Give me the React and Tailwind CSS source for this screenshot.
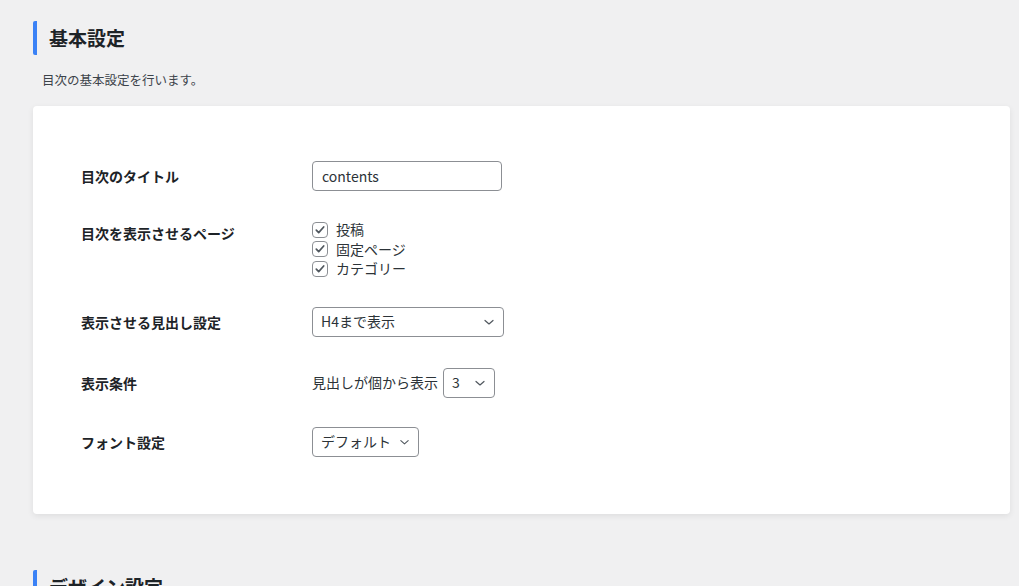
const font = { fontFamily: '"Noto Sans CJK JP", "Noto Sans", sans-serif' };

function Chevron({ className = '' }) {
  return (
    <svg className={className} width="12" height="12" viewBox="0 0 12 12" fill="none">
      <path d="M2 4.5l4 3.5 4-3.5" stroke="#50575e" strokeWidth="1.2" strokeLinecap="round" strokeLinejoin="round" />
    </svg>
  );
}

function Check({ label }) {
  return (
    <label className="flex items-center h-[19.5px] gap-[8px] text-[14px] text-[#2c3338] whitespace-nowrap">
      <span className="w-4 h-4 rounded-[4px] border border-[#8c8f94] bg-white flex items-center justify-center">
        <svg width="12" height="12" viewBox="0 0 12 12" fill="none">
          <path d="M2.3 6.2l2.4 2.4 5-5.6" stroke="#50575e" strokeWidth="1.7" strokeLinecap="round" strokeLinejoin="round" />
        </svg>
      </span>
      {label}
    </label>
  );
}

function Select({ value, className = '' }) {
  return (
    <div className={`h-[30px] border border-[#8c8f94] rounded-[4px] bg-white flex items-center justify-between pl-2 pr-[8px] text-[14px] text-[#2c3338] whitespace-nowrap ${className}`}>
      <span>{value}</span>
      <Chevron />
    </div>
  );
}

function Row({ label, children, className = '' }) {
  return (
    <div className={`flex ${className}`}>
      <div className="w-[231px] text-[14px] font-bold text-[#1d2327] leading-[20px] whitespace-nowrap">{label}</div>
      <div>{children}</div>
    </div>
  );
}

export default function App() {
  return (
    <div className="bg-[#f0f0f1] pl-[33px] pr-[9px] pt-[21px] overflow-hidden h-[586px]" style={font}>
      <div className="flex items-center h-[34px] border-l-4 border-[#3b82f6] rounded-[2px] pl-3">
        <h2 className="text-[19px] font-bold text-[#1d2327]">基本設定</h2>
      </div>
      <p className="text-[12.5px] text-[#3c434a] pl-[9px] mt-4 leading-[18px]">目次の基本設定を行います。</p>

      <div className="mt-[17px] bg-white rounded-[4px] shadow-[0_2px_6px_rgba(0,0,0,0.08)] h-[408px] pl-12 pt-[55px]">
        <Row label="目次のタイトル" className="items-center">
          <div className="w-[190px] h-[30px] border border-[#8c8f94] rounded-[4px] flex items-center px-[9px] text-[14px] text-[#2c3338]">contents</div>
        </Row>

        <Row label="目次を表示させるページ" className="mt-[32px]">
          <div className="flex flex-col -mt-[3px]">
            <Check label="投稿" />
            <Check label="固定ページ" />
            <Check label="カテゴリー" />
          </div>
        </Row>

        <Row label="表示させる見出し設定" className="items-center mt-[28px]">
          <Select value="H4まで表示" className="w-[192px]" />
        </Row>

        <Row label="表示条件" className="items-center mt-[31px]">
          <div className="flex items-center gap-[5px] text-[14px] text-[#2c3338] whitespace-nowrap">
            <span>見出しが個から表示</span>
            <Select value="3" className="w-[52px]" />
          </div>
        </Row>

        <Row label="フォント設定" className="items-center mt-[29px]">
          <Select value="デフォルト" className="w-[107px] gap-2" />
        </Row>
      </div>

      <div className="mt-[56px] flex items-center h-[34px] border-l-4 border-[#3b82f6] rounded-[2px] pl-3">
        <h2 className="text-[19px] font-bold text-[#1d2327]">デザイン設定</h2>
      </div>
    </div>
  );
}
